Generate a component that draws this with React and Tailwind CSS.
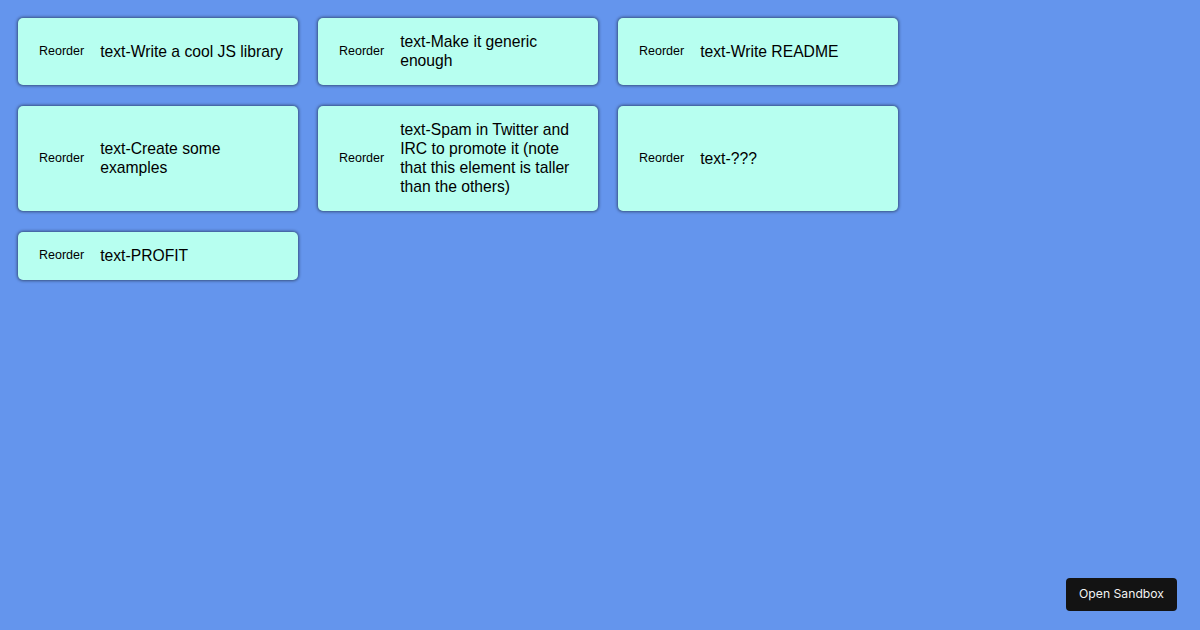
import React from 'react';

const items = [
  'Write a cool JS library',
  'Make it generic enough',
  'Write README',
  'Create some examples',
  'Spam in Twitter and IRC to promote it (note that this element is taller than the others)',
  '???',
  'PROFIT',
];

const Card = ({ text }) => (
  <div className="flex items-center gap-[16px] rounded-[5px] bg-[#b7fff0] pl-[21px] pr-[8px] pt-[14px] pb-[15px] shadow-[0_0_3px_1px_rgba(0,0,0,0.45)]">
    <span className="shrink-0 text-[12.5px] leading-[15px] text-black">Reorder</span>
    <span className="max-w-[187px] text-[15.7px] leading-[19px] text-black">text-{text}</span>
  </div>
);

const App = () => {
  return (
    <div className="relative w-[1200px] h-[630px] bg-[#6495ed] font-['Liberation_Sans',Arial,sans-serif] overflow-hidden">
      <div className="grid grid-cols-[280px_280px_280px] gap-x-[20px] gap-y-[21px] px-[18px] pt-[18px]">
        {items.map((t) => (
          <Card key={t} text={t} />
        ))}
      </div>

      {/* sandbox link */}
      <div className="absolute right-[23px] bottom-[19px] flex h-[33px] items-center rounded-[4px] bg-[#131313] px-[13px] text-[12.2px] text-[#f2f2f2] font-['Inter',sans-serif]">
        Open Sandbox
      </div>
    </div>
  );
};

export default App;
